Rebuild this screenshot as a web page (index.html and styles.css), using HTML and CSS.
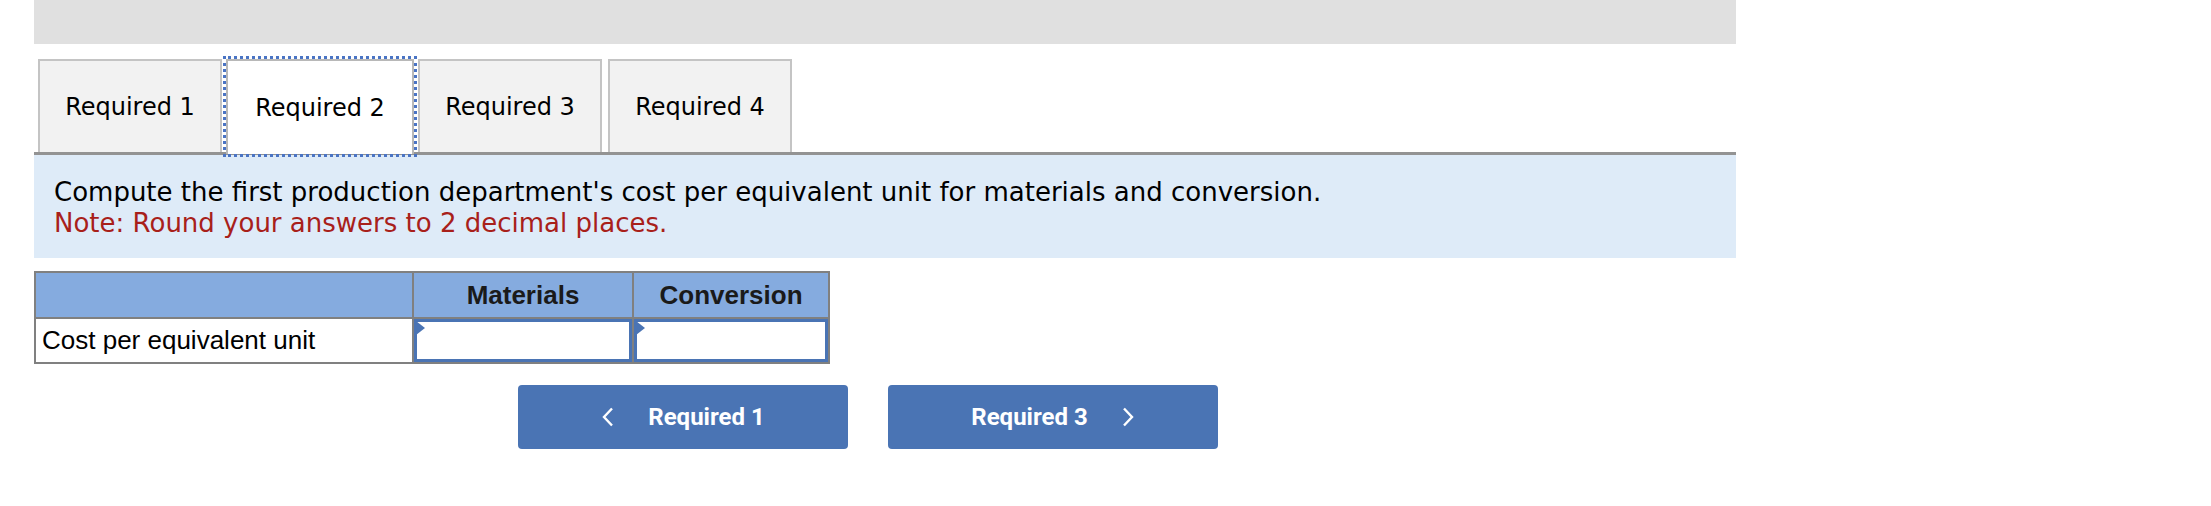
FILE: index.html
```html
<!DOCTYPE html>
<html lang="en">
<head>
  <meta charset="UTF-8" />
  <title>Required 2</title>
  <link rel="stylesheet" href="styles.css">
</head>
<body>
  <div class="page">
    <div class="top-bar"></div>

    <div class="tabs">
      <button class="tab">Required 1</button>
      <button class="tab active">Required 2</button>
      <button class="tab">Required 3</button>
      <button class="tab">Required 4</button>
    </div>

    <div class="question">
      <p>Compute the first production department's cost per equivalent unit for materials and conversion.</p>
      <p class="note">Note: Round your answers to 2 decimal places.</p>
    </div>

    <table class="answer-table">
      <tr>
        <th class="label-col"></th>
        <th>Materials</th>
        <th>Conversion</th>
      </tr>
      <tr>
        <td class="label-col">Cost per equivalent unit</td>
        <td class="input-cell"><input type="text"></td>
        <td class="input-cell"><input type="text"></td>
      </tr>
    </table>

    <div class="nav-buttons">
      <button class="nav-btn">
        <svg class="chevron" width="14" height="20" viewBox="0 0 14 20"><path d="M11 1.5 L3 10 L11 18.5" fill="none" stroke="#fff" stroke-width="2.4"/></svg>
        <span>Required 1</span>
      </button>
      <button class="nav-btn">
        <span>Required 3</span>
        <svg class="chevron" width="14" height="20" viewBox="0 0 14 20"><path d="M3 1.5 L11 10 L3 18.5" fill="none" stroke="#fff" stroke-width="2.4"/></svg>
      </button>
    </div>
  </div>
</body>
</html>
```

FILE: styles.css
```css
body {
  margin: 0;
  background: #fff;
  font-family: "DejaVu Sans", Verdana, sans-serif;
  color: #000;
}

.page {
  width: 1702px;
  margin-left: 34px;
}

.top-bar {
  height: 44px;
  background-color: #e0e0e0;
}

.tabs {
  display: flex;
  align-items: flex-end;
  gap: 6px;
  margin-top: 15px;
  padding-left: 4px;
  border-bottom: 3px solid #939393;
}

.tab {
  width: 184px;
  height: 93px;
  padding: 0;
  font-family: "DejaVu Sans", Verdana, sans-serif;
  font-size: 24px;
  color: #000;
  background-color: #f2f2f2;
  border: 2px solid #c4c4c4;
  border-bottom: none;
  cursor: pointer;
}

.tab.active {
  width: 188px;
  height: 95px;
  margin: 0 -2px -2px;
  position: relative;
  background-color: #fff;
  border-color: #b8b8b8;
  outline: 3px dotted #4a74c4;
  outline-offset: 0;
}

.question {
  background-color: #deebf8;
  padding: 22px 20px 19px;
  font-size: 26px;
  line-height: 31px;
}

.question p {
  margin: 0;
}

.note {
  color: #a8201a;
}

.answer-table {
  margin-top: 13px;
  border-collapse: collapse;
  font-family: "Liberation Sans", Arial, sans-serif;
}

.answer-table th,
.answer-table td {
  border: 2px solid #808080;
  padding: 0;
}

.answer-table th {
  background-color: #85abdf;
  height: 44px;
  width: 218px;
  font-size: 26px;
  color: #1a1a1a;
}

.answer-table th:last-child {
  width: 194px;
}

.answer-table .label-col {
  width: 370px;
}

.answer-table td {
  height: 43px;
  font-size: 26px;
}

.answer-table td.label-col {
  padding-left: 6px;
}

.input-cell {
  position: relative;
}

.input-cell input {
  display: block;
  box-sizing: border-box;
  width: 100%;
  height: 43px;
  border: 3px solid #4a74b4;
  margin: 0;
}

.input-cell::before {
  content: "";
  position: absolute;
  top: 2px;
  left: 2px;
  border-top: 7px solid transparent;
  border-bottom: 7px solid transparent;
  border-left: 9px solid #4a74b4;
}

.nav-buttons {
  display: flex;
  gap: 40px;
  margin-top: 21px;
  padding-left: 484px;
}

.nav-btn {
  display: flex;
  align-items: center;
  justify-content: center;
  gap: 33px;
  width: 330px;
  height: 64px;
  border: none;
  border-radius: 4px;
  background-color: #4a74b4;
  color: #fff;
  font-family: Roboto, "Liberation Sans", sans-serif;
  font-weight: bold;
  font-size: 24px;
  cursor: pointer;
}
```
